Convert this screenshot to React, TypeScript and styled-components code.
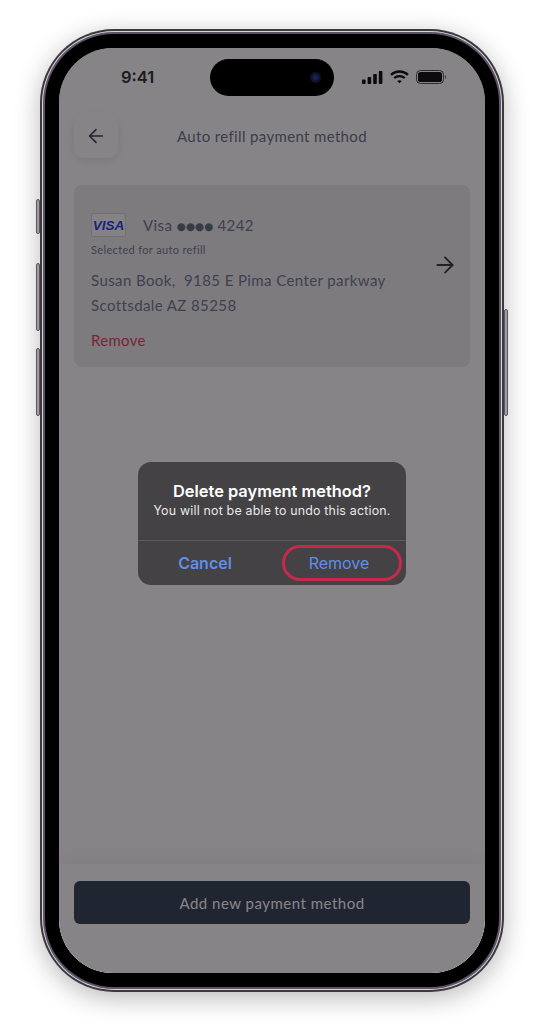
import { ArrowLeft, ArrowRight } from 'lucide-react';
import { createGlobalStyle, styled } from 'styled-components';

const GlobalStyle = createGlobalStyle`
  html, body {
    margin: 0;
    padding: 0;
    background: #fff;
  }
`;

export default function App() {
  return (
    <Page>
      <GlobalStyle />
      <Phone>
        <SideButton $side="left" $top={170} $height={35} />
        <SideButton $side="left" $top={234} $height={68} />
        <SideButton $side="left" $top={319} $height={68} />
        <SideButton $side="right" $top={280} $height={107} />
        <Bezel>
          <Screen>
            <StatusBar>
              <Clock>9:41</Clock>
              <StatusIcons>
                <SignalIcon />
                <WifiIcon />
                <BatteryIcon />
              </StatusIcons>
            </StatusBar>
            <Header>
              <BackButton>
                <ArrowLeft size={22} strokeWidth={1.7} />
              </BackButton>
              <Title>Auto refill payment method</Title>
            </Header>
            <Content>
              <Card>
                <CardInfo>
                  <CardRow>
                    <VisaBadge>VISA</VisaBadge>
                    <CardName>
                      Visa <Dots>●●●●</Dots> 4242
                    </CardName>
                  </CardRow>
                  <Selected>Selected for auto refill</Selected>
                  <AddressBlock>
                    <div>Susan Book,&nbsp; 9185 E Pima Center parkway</div>
                    <div>Scottsdale AZ 85258</div>
                  </AddressBlock>
                  <RemoveLink>Remove</RemoveLink>
                </CardInfo>
                <CardArrow>
                  <ArrowRight size={26} strokeWidth={1.7} />
                </CardArrow>
              </Card>
            </Content>
            <Footer>
              <AddButton>Add new payment method</AddButton>
            </Footer>
            <Overlay>
              <Dialog>
                <DialogText>
                  <DialogTitle>Delete payment method?</DialogTitle>
                  <DialogMessage>You will not be able to undo this action.</DialogMessage>
                </DialogText>
                <DialogActions>
                  <DialogAction $bold>Cancel</DialogAction>
                  <DialogAction>Remove</DialogAction>
                  <Ring />
                </DialogActions>
              </Dialog>
            </Overlay>
            <Island>
              <Lens />
            </Island>
          </Screen>
        </Bezel>
      </Phone>
    </Page>
  );
}

function SignalIcon() {
  return (
    <svg width="21" height="13" viewBox="0 0 21 13" fill="#0c0c0c">
      <rect x="0" y="8.5" width="3.6" height="4.5" rx="0.8" />
      <rect x="5.6" y="6" width="3.6" height="7" rx="0.8" />
      <rect x="11.2" y="3" width="3.6" height="10" rx="0.8" />
      <rect x="16.8" y="0" width="3.6" height="13" rx="0.8" />
    </svg>
  );
}

function WifiIcon() {
  return (
    <svg width="19" height="14" viewBox="0 0 19 14" fill="none" stroke="#0c0c0c" strokeWidth="2.3">
      <path d="M1 4.8 C5.8 0.4 13.2 0.4 18 4.8" />
      <path d="M4.2 8 C7.2 5.4 11.8 5.4 14.8 8" />
      <path d="M7.2 11 L9.5 13.3 L11.8 11 C10.4 9.9 8.6 9.9 7.2 11 Z" fill="#0c0c0c" stroke="none" />
    </svg>
  );
}

function BatteryIcon() {
  return (
    <svg width="31" height="14" viewBox="0 0 31 14" fill="none">
      <rect x="0.5" y="0.5" width="27" height="13" rx="4" stroke="#4a4a4c" />
      <rect x="2" y="2" width="24" height="10" rx="2.6" fill="#0c0c0c" />
      <path d="M29 5 C30.2 5.4 30.2 8.6 29 9 Z" fill="#4a4a4c" />
    </svg>
  );
}

const Page = styled.div`
  width: 534px;
  height: 1024px;
  padding: 29px 30px 32px 40px;
  box-sizing: border-box;
  overflow: hidden;
`;

const Phone = styled.div`
  position: relative;
  width: 464px;
  height: 963px;
  box-sizing: border-box;
  padding: 2px;
  border-radius: 74px;
  background: #3c3a3e;
  box-shadow: 0 6px 26px rgba(0, 0, 0, 0.28);
`;

const SideButton = styled.div<{ $side: 'left' | 'right'; $top: number; $height: number }>`
  position: absolute;
  top: ${(props) => props.$top}px;
  ${(props) => props.$side}: -4px;
  width: 4px;
  height: ${(props) => props.$height}px;
  box-sizing: border-box;
  border: 1px solid #5a585c;
  border-radius: 2px;
  background: #a09ca6;
`;

const Bezel = styled.div`
  width: 100%;
  height: 100%;
  box-sizing: border-box;
  padding: 17px;
  border-radius: 72px;
  background: #000;
  box-shadow: inset 0 0 0 1px #d8d4d8, inset 0 0 0 3px #5e5468;
`;

const Screen = styled.div`
  position: relative;
  display: flex;
  flex-direction: column;
  height: 100%;
  border-radius: 54px;
  background: #fff;
  overflow: hidden;
  font-family: Lato, 'Liberation Sans', sans-serif;
  color: #6c7890;
`;

const StatusBar = styled.div`
  display: flex;
  align-items: center;
  justify-content: space-between;
  height: 58px;
  padding: 0 38px 0 62px;
  flex-shrink: 0;
`;

const Clock = styled.span`
  font-family: Inter, 'Liberation Sans', sans-serif;
  font-size: 16.5px;
  font-weight: 600;
  color: #2e2e30;
`;

const StatusIcons = styled.div`
  display: flex;
  align-items: center;
  gap: 7px;
`;

const Island = styled.div`
  position: absolute;
  top: 11px;
  left: 151px;
  width: 124px;
  height: 37px;
  display: flex;
  align-items: center;
  justify-content: flex-end;
  padding-right: 13px;
  box-sizing: border-box;
  border-radius: 19px;
  background: #000;
`;

const Lens = styled.div`
  width: 11px;
  height: 11px;
  border-radius: 50%;
  background: radial-gradient(circle, #1c2a66 0%, #10142e 50%, #08080f 100%);
`;

const Header = styled.div`
  position: relative;
  display: flex;
  align-items: center;
  justify-content: center;
  height: 44px;
  margin: 8px 15px 0;
  flex-shrink: 0;
`;

const BackButton = styled.div`
  position: absolute;
  left: 0;
  top: 0;
  width: 44px;
  height: 44px;
  display: flex;
  align-items: center;
  justify-content: center;
  border-radius: 10px;
  background: #fff;
  color: #3a3d48;
  box-shadow: 0 3px 10px rgba(0, 0, 0, 0.1);
`;

const Title = styled.div`
  font-size: 15px;
  letter-spacing: 0.35px;
  color: #687186;
`;

const Content = styled.div`
  flex: 1;
  padding: 27px 15px 0;
`;

const Card = styled.div`
  display: flex;
  align-items: flex-start;
  justify-content: space-between;
  height: 182px;
  box-sizing: border-box;
  padding: 28px 17px 0;
  border-radius: 8px;
  background: #ececec;
`;

const CardInfo = styled.div`
  display: flex;
  flex-direction: column;
`;

const CardRow = styled.div`
  display: flex;
  align-items: center;
  gap: 17px;
`;

const VisaBadge = styled.div`
  width: 35px;
  height: 24px;
  box-sizing: border-box;
  display: flex;
  align-items: center;
  justify-content: center;
  border: 1px solid #d4d4d8;
  border-radius: 2px;
  background: #fafafa;
  font-family: 'Liberation Sans', sans-serif;
  font-size: 13.5px;
  font-weight: 700;
  font-style: italic;
  color: #233ce8;
`;

const CardName = styled.div`
  font-size: 15px;
  letter-spacing: 0.4px;
`;

const Dots = styled.span`
  font-family: 'DejaVu Sans', sans-serif;
  font-size: 10.5px;
  letter-spacing: 0;
  vertical-align: 1px;
  color: #5f6c80;
`;

const Selected = styled.div`
  margin-top: 6px;
  font-size: 11px;
  line-height: 14px;
  letter-spacing: 0.35px;
`;

const AddressBlock = styled.div`
  display: flex;
  flex-direction: column;
  gap: 6px;
  margin-top: 14px;
  font-size: 15px;
  line-height: 19px;
  letter-spacing: 0.4px;
`;

const RemoveLink = styled.div`
  margin-top: 15.5px;
  font-size: 15px;
  line-height: 18px;
  letter-spacing: 0.3px;
  color: #e0405f;
`;

const CardArrow = styled.div`
  display: flex;
  color: #343843;
  margin: 39px -5px 0 0;
`;

const Footer = styled.div`
  padding: 17px 15px 49px;
  background: #fff;
  box-shadow: 0 -6px 14px rgba(0, 0, 0, 0.05);
  flex-shrink: 0;
`;

const AddButton = styled.div`
  height: 43px;
  display: flex;
  align-items: center;
  justify-content: center;
  border-radius: 6px;
  background: #2f4053;
  color: #fff;
  font-size: 15px;
  letter-spacing: 0.5px;
`;

const Overlay = styled.div`
  position: absolute;
  inset: 0;
  display: flex;
  justify-content: center;
  align-items: flex-start;
  padding-top: 414px;
  background: rgba(15, 10, 15, 0.5);
`;

const Dialog = styled.div`
  width: 268px;
  height: 123px;
  display: flex;
  flex-direction: column;
  border-radius: 13px;
  background: #444244;
  font-family: Inter, 'Liberation Sans', sans-serif;
`;

const DialogText = styled.div`
  height: 79px;
  box-sizing: border-box;
  padding-top: 19px;
  text-align: center;
  border-bottom: 1px solid #5c5a5c;
`;

const DialogTitle = styled.div`
  font-size: 16.4px;
  line-height: 20px;
  font-weight: 600;
  color: #fff;
`;

const DialogMessage = styled.div`
  margin-top: 2px;
  font-size: 12.4px;
  line-height: 16px;
  letter-spacing: 0.2px;
  color: #e8e8e8;
`;

const DialogActions = styled.div`
  position: relative;
  flex: 1;
  display: grid;
  grid-template-columns: 134px 134px;
  align-items: center;
  justify-items: center;
`;

const DialogAction = styled.div<{ $bold?: boolean }>`
  font-size: 16px;
  font-weight: ${(props) => (props.$bold ? 600 : 400)};
  color: #5f8fe8;
`;

const Ring = styled.div`
  position: absolute;
  top: 4px;
  right: 4px;
  width: 120px;
  height: 36px;
  box-sizing: border-box;
  border: 3px solid #c52a4c;
  border-radius: 18px;
`;
